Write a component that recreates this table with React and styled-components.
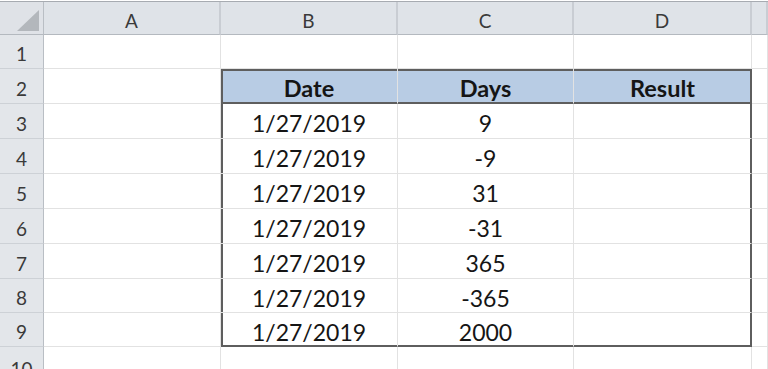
import React from 'react';
import styled, { createGlobalStyle } from 'styled-components';

const GlobalStyle = createGlobalStyle`
  html, body {
    margin: 0;
    padding: 0;
    background: #ffffff;
    overflow: hidden;
  }
  body {
    font-family: Lato, "Open Sans", sans-serif;
  }
`;

const DARK = '#5e5e5e';
const GRID = '#e2e2e2';

const Sheet = styled.div`
  display: grid;
  grid-template-columns: 44px 177px 177px 176px 178px 1fr;
  grid-template-rows: 33px 34px 35px 35px 35px 35px 35px 35px 34px 34px 40px;
  width: 768px;
  margin-top: 1px;
  border-top: 1px solid #a7abb1;
  font-family: Lato, "Open Sans", sans-serif;
`;

const Corner = styled.div`
  position: relative;
  box-sizing: border-box;
  background: #dfe2e7;
  border-right: 1px solid #b9bec4;
  border-bottom: 1px solid #b4b9bf;
`;

const CornerMark = styled.div`
  position: absolute;
  left: 17px;
  top: 8px;
  width: 22px;
  height: 21px;
  background: #b3b7bc;
  clip-path: polygon(100% 0, 100% 100%, 0 100%);
`;

const ColHead = styled.div`
  box-sizing: border-box;
  display: flex;
  align-items: center;
  justify-content: center;
  padding-top: 5px;
  background: #dfe3e8;
  border-right: 2px solid #c9cdd3;
  border-bottom: 1px solid #b4b9bf;
  color: #3a3a3a;
  font-size: 19px;
`;

const RowHead = styled.div`
  box-sizing: border-box;
  display: flex;
  align-items: center;
  justify-content: center;
  padding-top: 4px;
  background: #e3e6ea;
  border-right: 1px solid #b9bec4;
  border-bottom: 1px solid #cdd1d6;
  color: #3a3a3a;
  font-size: 19px;
`;

const Cell = styled.div`
  box-sizing: border-box;
  display: flex;
  align-items: center;
  justify-content: center;
  padding-top: 4px;
  font-size: ${({ $head }) => ($head ? '23.5px' : '23px')};
  font-weight: ${({ $head }) => ($head ? 700 : 400)};
  color: #151515;
  background: ${({ $head }) => ($head ? '#b8cce4' : '#ffffff')};
  border-right: 1px solid ${({ $right }) => ($right ? DARK : GRID)};
  border-bottom: 1px solid ${({ $bottom }) => ($bottom ? DARK : GRID)};
  box-shadow: ${({ $left, $top, $right, $bottom }) =>
    [
      $left && `inset 2px 0 0 ${DARK}`,
      $top && `inset 0 2px 0 ${DARK}`,
      $right && `inset -1px 0 0 ${DARK}`,
      $bottom && `inset 0 -1px 0 ${DARK}`,
    ]
      .filter(Boolean)
      .join(', ') || 'none'};
`;

const columns = ['A', 'B', 'C', 'D', ''];

const data = [
  ['1/27/2019', '9'],
  ['1/27/2019', '-9'],
  ['1/27/2019', '31'],
  ['1/27/2019', '-31'],
  ['1/27/2019', '365'],
  ['1/27/2019', '-365'],
  ['1/27/2019', '2000'],
];

// rows 1..10, table lives in B2:D9
const rows = [
  { n: 1, values: [] },
  { n: 2, values: ['Date', 'Days', 'Result'], head: true },
  ...data.map((v, i) => ({ n: i + 3, values: [v[0], v[1], ''] })),
  { n: 10, values: [] },
];

export default function App() {
  return (
    <>
      <GlobalStyle />
      <Sheet>
        <Corner>
          <CornerMark />
        </Corner>
        {columns.map((c, i) => (
          <ColHead key={i}>{c}</ColHead>
        ))}
        {rows.map((row) => {
          const inTable = row.n >= 2 && row.n <= 9;
          return (
            <React.Fragment key={row.n}>
              <RowHead>{row.n}</RowHead>
              {columns.map((c, ci) => {
                const tc = inTable && ci >= 1 && ci <= 3;
                return (
                  <Cell
                    key={c + ci}
                    $head={tc && row.head}
                    $left={tc && ci === 1}
                    $right={tc && ci === 3}
                    $top={tc && row.n === 2}
                    $bottom={tc && (row.n === 2 || row.n === 9)}
                  >
                    {tc ? row.values[ci - 1] : ''}
                  </Cell>
                );
              })}
            </React.Fragment>
          );
        })}
      </Sheet>
    </>
  );
}
